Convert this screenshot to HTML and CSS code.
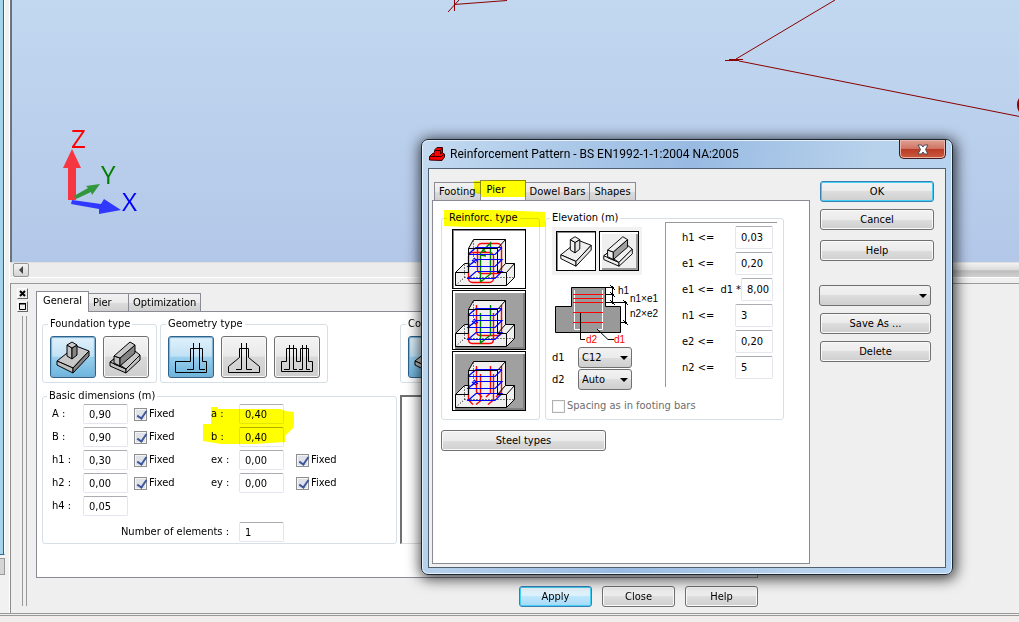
FILE: index.html
```html
<!DOCTYPE html>
<html lang="en">
  <head>
    <meta charset="utf-8" />
    <title>Reinforcement Pattern</title>
    <link rel="stylesheet" href="styles.css">
  </head>

  <body>
    <!-- shapes used by more than one button -->
    <svg class="defs" width="0" height="0">
      <symbol id="pad" viewBox="0 0 46 42">
        <path class="top" d="M7 25 L26 10 L39 15 L23 32 Z" />
        <path class="side" d="M7 25 L23 32 V37 L7 29 Z" />
        <path class="dark" d="M23 32 L39 15 V20 L23 37 Z" />
        <path class="side" d="M17 9 L22 12 V23 L17 20 Z" />
        <path class="dark" d="M22 12 L27 9 V19 L22 23 Z" />
        <path class="top" d="M17 9 L22 6 L27 9 L22 12 Z" />
      </symbol>
      <symbol id="strip" viewBox="0 0 46 42">
        <path class="side" d="M7 26 L11 23 V28 L23 33 V37 L7 30 Z" />
        <path class="side" d="M7 26 L11 23 L23 29 V33 Z" />
        <path class="top" d="M17 29 L32 15 L37 19 L23 33 Z" />
        <path class="side" d="M23 33 L37 19 V24 L23 37 Z" />
        <path class="side" d="M11 20 L17 22 V30 L11 27 Z" />
        <path class="dark" d="M17 22 L32 9 V17 L17 30 Z" />
        <path class="top" d="M11 20 L27 6 L32 9 L17 22 Z" />
      </symbol>
      <symbol id="pier" viewBox="0 0 74 60">
        <path fill="#f0f0f0" stroke="#000" d="M3.5 56.5 V43.5 L12.5 34.5 H16.5 V19.5 L21.5 10.5 H53.5 V34.5 H62.5 V48.5 L54.5 56.5 Z" />
        <path fill="none" stroke="#000" stroke-dasharray="1 2" d="M3.5 56.5 L12.5 48.5 H62.5 M12.5 48.5 V34.5 H21.5 V10.5" />
      </symbol>
      <symbol id="pier-front" viewBox="0 0 74 60">
        <path fill="none" stroke="#000" d="M3.5 43.5 H16.5 V19.5 H45.5 V43.5 H54.5 V56.5 M45.5 19.5 L53.5 10.5 M45.5 43.5 L53.5 34.5 M54.5 43.5 L62.5 34.5" />
      </symbol>
      <symbol id="hoops" viewBox="0 0 74 60">
        <path fill="none" stroke="#00f" stroke-width="1.2" d="M16 25.5 H43 L50 18.5 M24 18.5 H50 M16 25.5 L24 18.5 M16 37.5 H43 L50 30.5 H24 Z M16 49.5 H43 L50 42.5 H24 Z M20 31 l4 3 M22 29 l4 4" />
      </symbol>
    </svg>

    <div class="app">
      <div class="workspace">
        <div class="edge">
          <div class="edge-frame"></div>
          <div class="edge-button"></div>
        </div>

        <div class="document">
          <div class="view">
            <svg class="scene" width="100%" height="100%">
              <g fill="none" stroke="#8b0000">
                <path d="M442.5 0 V11 M436 12 L447 0 M442 4.5 L495 0.5" />
                <path d="M713 60.5 H727 M717 59.5 H731 M724 59 L823 0 M727 61 L1010 117" />
                <ellipse cx="1011" cy="105" rx="5" ry="8" stroke-width="2" />
              </g>
              <path fill="#f63640" d="M56 200 V168 H51 L60 149 L69 168 H64 V200 Z" />
              <path fill="#32963c" d="M62 196 L76 188 L74 186 L88 184 L80 195 L79 192 L64 199 Z" />
              <path fill="#3038ff" d="M60 200 L89 204 L92 199 L109 210 L87 214 L87 209 L59 204 Z" />
              <text class="axis axis-z" x="59" y="148">Z</text>
              <text class="axis axis-y" x="89" y="184">Y</text>
              <text class="axis axis-x" x="110" y="211">X</text>
            </svg>
          </div>

          <div class="scrollbar">
            <button class="scroll-left" aria-label="Scroll left"></button>
          </div>

          <div class="panel">
            <div class="dock">
              <button class="dock-button" aria-label="Close panel">
                <svg width="9" height="9"><path d="M2 2 L7 7 M7 2 L2 7" /></svg>
              </button>
              <button class="dock-button" aria-label="Maximize panel">
                <svg width="9" height="9"><path d="M1 2 H8 M1.5 1 V7.5 H7.5 V1 M1 1.5 H8" /></svg>
              </button>
              <div class="grip"></div>
            </div>

            <form class="footing">
              <div class="tabs" role="tablist">
                <button type="button" class="tab active" role="tab">General</button>
                <button type="button" class="tab tab-pier" role="tab">Pier</button>
                <button type="button" class="tab" role="tab">Optimization</button>
              </div>

              <div class="page general">
                <div class="types">
                  <fieldset class="icons">
                    <legend>Foundation type</legend>
                    <button type="button" class="icon selected" aria-label="Pad"><svg><use href="#pad" /></svg></button>
                    <button type="button" class="icon" aria-label="Strip"><svg><use href="#strip" /></svg></button>
                  </fieldset>
                  <fieldset class="icons">
                    <legend>Geometry type</legend>
                    <button type="button" class="icon selected" aria-label="Rectangular">
                      <svg viewBox="0 0 46 42"><path class="line" d="M7.5 36.5 V25.5 H22.5 V12.5 H34.5 V25.5 H38.5 V36.5 Z M25.5 7 V33.5 H19 M31.5 7 V33.5 H37" /></svg>
                    </button>
                    <button type="button" class="icon" aria-label="Tapered">
                      <svg viewBox="0 0 46 42"><path class="line" d="M7.5 36.5 V30.5 L18.5 21.5 V12.5 H27.5 V21.5 L38.5 30.5 V36.5 Z M20.5 7 V33.5 H15 M25.5 7 V33.5 H31" /></svg>
                    </button>
                    <button type="button" class="icon" aria-label="Double">
                      <svg viewBox="0 0 46 42"><path class="line" d="M7.5 35.5 V25.5 H12.5 V12.5 H22.5 V25.5 H26.5 V12.5 H34.5 V25.5 H38.5 V35.5 Z M15.5 9 V33.5 H10 M19.5 9 V33.5 H23 M28.5 9 V33.5 H25 M32.5 9 V33.5 H36" /></svg>
                    </button>
                  </fieldset>
                </div>

                <fieldset class="icons">
                  <legend>Co</legend>
                  <button type="button" class="icon selected" aria-label="Connection"><svg><use href="#pad" /></svg></button>
                </fieldset>

                <fieldset class="basic">
                  <legend>Basic dimensions (m)</legend>
                  <div class="dims">
                    <div class="dims-left">
                      <label for="dim-A">A :</label>
                      <input type="text" id="dim-A" value="0,90" />
                      <label class="check"><input type="checkbox" checked /> Fixed</label>
                      <label for="dim-B">B :</label>
                      <input type="text" id="dim-B" value="0,90" />
                      <label class="check"><input type="checkbox" checked /> Fixed</label>
                      <label for="dim-h1">h1 :</label>
                      <input type="text" id="dim-h1" value="0,30" />
                      <label class="check"><input type="checkbox" checked /> Fixed</label>
                      <label for="dim-h2">h2 :</label>
                      <input type="text" id="dim-h2" value="0,00" />
                      <label class="check"><input type="checkbox" checked /> Fixed</label>
                      <label for="dim-h4">h4 :</label>
                      <input type="text" id="dim-h4" value="0,05" />
                    </div>
                    <div class="dims-right">
                      <label for="dim-a">a :</label>
                      <input type="text" id="dim-a" value="0,40" />
                      <span></span>
                      <label for="dim-b">b :</label>
                      <input type="text" id="dim-b" value="0,40" />
                      <span></span>
                      <label for="dim-ex">ex :</label>
                      <input type="text" id="dim-ex" value="0,00" />
                      <label class="check"><input type="checkbox" checked /> Fixed</label>
                      <label for="dim-ey">ey :</label>
                      <input type="text" id="dim-ey" value="0,00" />
                      <label class="check"><input type="checkbox" checked /> Fixed</label>
                      <svg class="marker marker-ab" width="92" height="37">
                        <path d="M8 0 L15 0 L15 2 H78 L82 4 L91 5 V20 L82 29 V35 L50 37 H18 L0 34 V17 H8 Z" />
                      </svg>
                    </div>
                  </div>
                  <div class="count">
                    <label for="elements">Number of elements :</label>
                    <input type="text" id="elements" value="1" />
                  </div>
                </fieldset>

                <div class="preview"></div>
              </div>

              <div class="actions">
                <button type="button" class="btn hot">Apply</button>
                <button type="button" class="btn">Close</button>
                <button type="button" class="btn">Help</button>
              </div>
            </form>
          </div>
        </div>
      </div>

      <div class="status"></div>

      <div class="dialog" role="dialog" aria-labelledby="dialog-title">
        <div class="titlebar">
          <svg width="16" height="14" viewBox="0 0 16 14">
            <path fill="#f00" stroke="#300" d="M0.5 13 V9.5 L3.5 6.5 H5 L6 2.5 L8 0.5 H13.5 V6 L15.5 7 V10 L13 13.5 Z" />
            <path fill="none" stroke="#300" d="M1 9.5 H12.5 L15 7 M5 9 V6.5 M6 3.5 H11.5 V7 L13.5 5 M11.5 3.5 L13 1" />
          </svg>
          <span id="dialog-title">Reinforcement Pattern - BS EN1992-1-1:2004 NA:2005</span>
          <button class="close" aria-label="Close">
            <svg width="14" height="11" viewBox="0 0 14 11">
              <path d="M2 1 H5.5 L7 3 L8.5 1 H12 L9.5 5.5 L12 10 H8.5 L7 8 L5.5 10 H2 L4.5 5.5 Z" />
            </svg>
          </button>
        </div>

        <form class="client">
          <div class="sheet">
            <div class="tabs" role="tablist">
              <button type="button" class="tab" role="tab">Footing</button>
              <button type="button" class="tab active" role="tab">Pier</button>
              <button type="button" class="tab" role="tab">Dowel Bars</button>
              <button type="button" class="tab" role="tab">Shapes</button>
            </div>

            <div class="page pattern">
              <svg class="marker marker-tab" width="52" height="22">
                <path d="M0 1 L22 0 H52 V17 H7 V14 L0 13 Z" />
              </svg>
              <svg class="marker marker-type" width="102" height="18">
                <path d="M0 0 H50 L101 2 V17 H24 L0 16 Z" />
              </svg>

              <div class="groups">
                <fieldset class="reinforcement">
                  <legend>Reinforc. type</legend>
                  <button type="button" class="shape chosen" aria-label="Closed bars">
                    <svg viewBox="0 0 74 60">
                      <use href="#pier" />
                      <g class="red"><rect x="16.5" y="23.5" width="25" height="30" rx="4" /><rect x="25.5" y="14.5" width="24" height="30" rx="4" /></g>
                      <path class="green" d="M28.5 53 V24 L38.5 14 V45 L28.5 53 M30 21 l4 2 M29 26 l5 1" />
                      <use href="#hoops" />
                      <use href="#pier-front" />
                    </svg>
                  </button>
                  <button type="button" class="shape" aria-label="U bars">
                    <svg viewBox="0 0 74 60">
                      <use href="#pier" />
                      <g class="red"><path d="M16.5 23 V49 Q16.5 53.5 20 53.5 H38 Q41.5 53.5 41.5 49 V23 M24.5 15 V41 Q24.5 45.5 28 45.5 H46 Q49.5 45.5 49.5 41 V15" /></g>
                      <path class="green" d="M28.5 23 V53 L38.5 45 V15" />
                      <use href="#hoops" />
                      <use href="#pier-front" />
                    </svg>
                  </button>
                  <button type="button" class="shape" aria-label="Starter bars">
                    <svg viewBox="0 0 74 60">
                      <use href="#pier" />
                      <g class="red"><path d="M16.5 23 V49 L21 53.5 M28.5 23 V50 L24 53.5 M41.5 23 V49 L36 53.5 M24.5 15 V41 L30 46 M38.5 15 V42 L34 46 M49.5 15 V41 L44 46" /></g>
                      <use href="#hoops" />
                      <use href="#pier-front" />
                    </svg>
                  </button>
                </fieldset>

                <fieldset class="elevation">
                  <legend>Elevation (m)</legend>
                  <div class="elevation-left">
                    <div class="toolbar">
                      <button type="button" class="flat chosen" aria-label="Pad elevation"><svg viewBox="3 2 40 38"><use href="#pad" width="46" height="42" /></svg></button>
                      <button type="button" class="flat" aria-label="Strip elevation"><svg viewBox="3 2 40 38"><use href="#strip" width="46" height="42" /></svg></button>
                    </div>

                    <svg class="section" width="106" height="60">
                      <path fill="#999" stroke="#000" d="M0.5 46.5 V20.5 H16.5 V1.5 H50.5 V20.5 H65.5 V46.5 Z" />
                      <path fill="none" stroke="#fff" d="M19.5 4 V43.5 H25 M47.5 4 V43.5 H42" />
                      <path fill="none" stroke="#f00" d="M18 8.5 H48 M18 12.5 H48 M18 16.5 H48 M18 26.5 H48 M18 36.5 H48" />
                      <path fill="none" stroke="#000" d="M50 1.5 H59 M50 8.5 H59 M50 16.5 H72 M66 36.5 H72 M57.5 0 V18 M70.5 15 V38 M55 -1 l5 5 M55 6 l5 5 M55 14 l5 5 M68 14 l5 5 M68 34 l5 5 M25.5 27 V53.5 H30 M42 43 L53 53.5 H59" />
                      <text x="63" y="8">h1</text>
                      <text x="75" y="16">n1×e1</text>
                      <text x="75" y="31">n2×e2</text>
                      <text class="bar" x="31" y="57">d2</text>
                      <text class="bar" x="59" y="57">d1</text>
                    </svg>

                    <div class="bars">
                      <label for="bar-d1">d1</label>
                      <div class="select"><select id="bar-d1"><option>C12</option></select></div>
                      <label for="bar-d2">d2</label>
                      <div class="select"><select id="bar-d2"><option>Auto</option></select></div>
                    </div>
                  </div>

                  <div class="limits">
                    <label for="lim-h1">h1 &lt;=</label>
                    <input type="text" id="lim-h1" value="0,03" />
                    <label for="lim-e1">e1 &lt;=</label>
                    <input type="text" id="lim-e1" value="0,20" />
                    <label for="lim-e1d">e1 &lt;=  d1 *</label>
                    <input type="text" id="lim-e1d" class="short" value="8,00" />
                    <label for="lim-n1">n1 &lt;=</label>
                    <input type="text" id="lim-n1" value="3" />
                    <label for="lim-e2">e2 &lt;=</label>
                    <input type="text" id="lim-e2" value="0,20" />
                    <label for="lim-n2">n2 &lt;=</label>
                    <input type="text" id="lim-n2" value="5" />
                  </div>

                  <label class="check disabled"><input type="checkbox" disabled /> Spacing as in footing bars</label>
                </fieldset>
              </div>

              <button type="button" class="btn steel">Steel types</button>
            </div>
          </div>

          <div class="commands">
            <button type="button" class="btn focus">OK</button>
            <button type="button" class="btn">Cancel</button>
            <button type="button" class="btn help">Help</button>
            <div class="select presets"><select aria-label="Saved patterns"><option></option></select></div>
            <button type="button" class="btn narrow">Save As ...</button>
            <button type="button" class="btn narrow">Delete</button>
          </div>
        </form>
      </div>
    </div>
  </body>
</html>
```

FILE: styles.css
```css
* {
  box-sizing: border-box;
}

body {
  margin: 0;
  font: 11px/14px "DejaVu Sans Condensed", "DejaVu Sans", sans-serif;
  color: #000;
  background: #efefef;
}

button,
input,
select {
  font: inherit;
  color: inherit;
  margin: 0;
  padding: 0;
}

svg {
  display: block;
}

.defs {
  position: absolute;
}

.app {
  position: relative;
  display: flex;
  flex-direction: column;
  min-height: 100vh;
  overflow: hidden;
}

.workspace {
  flex: 1;
  display: flex;
}

/* edge of the neighbouring window */
.edge {
  width: 10px;
  display: flex;
  flex-direction: column;
  border-right: 1px solid #fff;
  background: #f1f1f1;
}

.edge-frame {
  flex: 1;
  width: 5px;
  border-right: 1px solid #fff;
  border-bottom: 1px solid #2c6c94;
  background: linear-gradient(to right, #a4d4ec 3px, #2f607f 3px);
}

.edge-button {
  width: 5px;
  height: 17px;
  margin: 3px 0 38px;
  border: 1px solid #999;
  border-left: 0;
  background: #d4d4d4;
}

.document {
  flex: 1;
  min-width: 0;
  display: flex;
  flex-direction: column;
}

.view {
  flex: 1;
  display: flex;
  border-left: 2px solid #6b737c;
  background: linear-gradient(#c2d8f0, #b3c7e8);
  overflow: hidden;
}

.scene {
  flex: 1;
  height: auto;
}

.axis {
  font: 26px "Open Sans", sans-serif;
}

.axis-z {
  fill: #f00;
}

.axis-y {
  fill: #008000;
}

.axis-x {
  fill: #00f;
}

.scrollbar {
  height: 16px;
  margin-bottom: 5px;
  padding-left: 3px;
  border-top: 1px solid #e0e0e0;
  border-bottom: 1px solid #fff;
  background: linear-gradient(to right, #ececec 50%, transparent 50%), linear-gradient(#f2f2f2, #dadada 50%, #bdbdbd 55%, #d0d0d0);
}

.scroll-left {
  display: block;
  width: 16px;
  height: 14px;
  border: 1px solid #979797;
  border-radius: 2px;
  background: linear-gradient(#f4f4f4, #d4d4d4);
}

.scroll-left::before {
  content: "";
  display: block;
  width: 0;
  margin: 0 auto;
  border: 4px solid transparent;
  border-left: 0;
  border-right-color: #444;
}

.panel {
  display: flex;
  padding: 7px 0 6px 6px;
  border-top: 1px solid #999;
  border-left: 1px solid #8c8c8c;
}

.dock {
  width: 11px;
  margin: -3px 8px 0 0;
  display: flex;
  flex-direction: column;
  gap: 2px;
}

.dock-button {
  height: 11px;
  border: 1px solid #fff;
  border-right-color: #666;
  border-bottom-color: #666;
  background: #efefef;
}

.dock-button path {
  fill: none;
  stroke: #000;
  stroke-width: 2;
}

.dock-button + .dock-button path {
  stroke-width: 1;
}

.grip {
  flex: 1;
  width: 5px;
  margin: 2px 0 1px 5px;
  border: solid #999;
  border-width: 0 1px;
}

.footing {
  width: 722px;
  max-width: 100%;
}

.tabs {
  display: flex;
  align-items: flex-end;
}

.tab {
  height: 18px;
  padding: 0 4px;
  border: 1px solid #898c95;
  border-bottom: 0;
  margin-right: -1px;
  background: linear-gradient(#f2f2f2, #eaeaea 50%, #dcdcdc 50%, #d0d0d0);
}

.tab.active {
  position: relative;
  height: 21px;
  margin-bottom: -1px;
  padding: 0 6px 2px;
  background: #fff;
}

.tab-pier {
  width: 41px;
  text-align: left;
}

.sheet .tab.active {
  width: 46px;
  text-align: left;
}

.page {
  border: 1px solid #898c95;
  background: #fff;
}

.general {
  display: grid;
  grid-template-columns: 355px 1fr;
  align-content: start;
  gap: 6px 3px;
  min-height: 267px;
  padding: 5px;
}

fieldset {
  min-width: 0;
  margin: 0;
  border: 1px solid #d5dfe5;
  border-radius: 3px;
}

legend {
  height: 14px;
  margin-left: -2px;
  padding: 0 2px;
}

.types {
  display: flex;
  gap: 3px;
}

.icons {
  display: flex;
  gap: 7px;
  padding: 5px 7px 4px;
}

.icon {
  width: 46px;
  height: 42px;
  border: 1px solid #707070;
  border-radius: 3px;
  background: linear-gradient(#f4f4f4, #e9e9e9 48%, #d8d8d8 50%, #cecece);
  box-shadow: inset 0 0 0 1px #f8f8f8;
}

.icon svg {
  width: 46px;
  height: 42px;
  margin: -1px;
}

.icon.selected {
  border-color: #2c628b;
  background: linear-gradient(#e0f1fb, #c2e2f5 48%, #9bd0ee 50%, #6cb4dd);
  box-shadow: inset 0 0 1px 1px #7db0d0;
}

.icon {
  --top: #c8c8c8;
  --side: #c0c0c0;
  --dark: #848484;
}

.flat {
  --top: #f0f0f0;
  --side: #f0f0f0;
  --dark: #a0a0a0;
}

.flat.chosen {
  --dark: #e4e4e4;
}

#pad path,
#strip path {
  stroke: #000;
  stroke-linejoin: round;
}

.top {
  fill: var(--top);
}

.side {
  fill: var(--side);
}

.dark {
  fill: var(--dark);
}

.line {
  fill: none;
  stroke: #000;
}

input[type="text"] {
  width: 45px;
  height: 20px;
  padding: 1px 0 0 5px;
  border: 1px solid #e3e6ee;
  border-top-color: #abadb3;
  border-radius: 2px;
  background: #fff;
}

.basic {
  padding: 1px 0 1px 9px;
}

.basic legend {
  margin-left: -5px;
}

.dims {
  display: flex;
}

.dims-left,
.dims-right {
  display: grid;
  grid-auto-rows: 20px;
  align-items: center;
  row-gap: 3px;
}

.dims-left {
  grid-template-columns: 31px 51px 77px;
}

.dims-right {
  position: relative;
  grid-template-columns: 28px 57px 1fr;
  align-content: start;
}

.check {
  display: flex;
  align-items: center;
  gap: 2px;
}

.check input {
  appearance: none;
  width: 13px;
  height: 13px;
  border: 1px solid #8e8f8f;
  background: #dfe3e9;
  box-shadow: inset 0 0 0 1px #f4f4f4;
}

.check input:checked::before {
  content: "";
  display: block;
  width: 4px;
  height: 8px;
  margin: 0 0 0 4px;
  border: solid #3f569b;
  border-width: 0 2px 2px 0;
  transform: rotate(35deg);
}

.check.disabled {
  color: #6d6d6d;
}

.check.disabled input {
  border-color: #b1b1b1;
  background: #fff;
}

.count {
  display: flex;
  align-items: center;
  justify-content: flex-end;
  gap: 10px;
  margin-top: 6px;
  padding-right: 112px;
}

.preview {
  margin-top: 6px;
  border: 2px solid #6f6f6f;
  border-bottom: 1px solid #ddd;
}

/* highlighter strokes */
.marker {
  position: absolute;
  fill: #ff0;
  mix-blend-mode: multiply;
  pointer-events: none;
}

.marker-ab {
  left: -8px;
  top: 3px;
}

.marker-tab {
  left: 41px;
  top: -21px;
  z-index: 1;
}

.marker-type {
  left: 11px;
  top: 9px;
}

.actions {
  display: flex;
  justify-content: flex-end;
  gap: 10px;
  margin-top: 8px;
}

.btn {
  height: 21px;
  border: 1px solid #707070;
  border-radius: 3px;
  background: linear-gradient(#f2f2f2, #ebebeb 50%, #dddddd 50%, #cfcfcf);
  box-shadow: inset 0 0 0 1px #fafafa;
}

.actions .btn {
  width: 73px;
}

.btn.hot,
.btn.focus {
  border-color: #3c7fb1;
  box-shadow: inset 0 0 0 1px #43d0f8;
}

.btn.hot {
  background: linear-gradient(#eaf6fd, #d9f0fc 50%, #bee6fd 50%, #a7d9f5);
}

.status {
  height: 9px;
  border-top: 3px double #999;
  background: #f1edec;
}

.dialog {
  position: absolute;
  left: 421px;
  top: 139px;
  width: 532px;
  padding: 0 6px 6px;
  border: 1px solid #1c2733;
  border-radius: 7px;
  background: linear-gradient(100deg, #c3daf0, #98bae2 45%, #b8d2ec 75%, #b3d3f3);
  box-shadow: inset 0 0 0 1px #e4f1fc, 1px 2px 14px 2px rgba(0, 0, 0, 0.75);
}

.titlebar {
  position: relative;
  display: flex;
  align-items: center;
  gap: 5px;
  height: 28px;
  padding-left: 1px;
  font: 12px/16px Roboto, sans-serif;
}

.close {
  position: absolute;
  right: 0;
  top: 0;
  width: 47px;
  height: 19px;
  display: flex;
  align-items: center;
  justify-content: center;
  border: 1px solid #431a1c;
  border-top: 0;
  border-radius: 0 0 5px 5px;
  background: linear-gradient(#e0a293, #cf7463 48%, #b83a26 50%, #cc5a3c);
  box-shadow: inset 0 0 0 1px #e8b5a8;
}

.close path {
  fill: #fff;
  stroke: #4a4a58;
}

.client {
  display: flex;
  justify-content: space-between;
  padding: 11px 11px 3px 3px;
  border: 1px solid #4f6070;
  background: #efefef;
}

.sheet {
  width: 378px;
}

.sheet .tabs {
  padding-left: 2px;
}

.pattern {
  position: relative;
  min-height: 364px;
  padding: 10px 8px;
}

.groups {
  display: flex;
  gap: 5px;
}

.reinforcement {
  display: flex;
  flex-direction: column;
  gap: 1px;
  width: 99px;
  padding: 4px 7px 8px;
}

.shape {
  width: 74px;
  height: 60px;
  margin-left: 3px;
  border: 1px solid #000;
  background: #a0a0a0;
  box-shadow: inset 1px 1px 0 1px #fff, inset -1px -1px 0 1px #808080;
}

.shape svg {
  width: 74px;
  height: 60px;
  margin: -1px;
}

.shape.chosen,
.flat.chosen {
  background: #fff;
  box-shadow: inset 1px 1px 0 #888;
}

.red,
.green {
  fill: none;
  stroke: #f00;
  stroke-width: 1.4;
}

.green {
  stroke: #008000;
}

.elevation {
  display: grid;
  grid-template-columns: 113px 112px;
  width: 239px;
  padding: 2px 6px 6px;
}

.toolbar {
  display: flex;
  gap: 3px;
  width: 90px;
  padding: 4px;
  background: #f2f2f2;
}

.flat {
  width: 40px;
  height: 40px;
  border: 1px solid #000;
  background: #efefef;
  box-shadow: inset 1px 1px 0 1px #fff, inset -1px -1px 0 1px #999;
}

.flat svg {
  width: 38px;
  height: 38px;
}

.section {
  margin: 11px 0 1px 3px;
  overflow: visible;
}

.section text {
  font: 10px "Liberation Sans", sans-serif;
}

.section .bar {
  fill: #f00;
}

.bars {
  display: grid;
  grid-template-columns: 26px 54px;
  row-gap: 1px;
  align-items: center;
}

.select {
  position: relative;
}

.select select {
  appearance: none;
  display: block;
  width: 100%;
  height: 21px;
  padding-left: 3px;
  border: 1px solid #707070;
  border-radius: 3px;
  background: linear-gradient(#f2f2f2, #ebebeb 50%, #dddddd 50%, #cfcfcf);
}

.select::after {
  content: "";
  position: absolute;
  right: 4px;
  top: 9px;
  border: 4px solid transparent;
  border-top-color: #000;
  border-bottom: 0;
  pointer-events: none;
}

.limits {
  display: grid;
  grid-template-columns: minmax(0, 1fr) 38px;
  grid-auto-rows: 23px;
  align-items: center;
  row-gap: 3px;
  height: 165px;
  margin-top: -5px;
  padding: 3px 4px 0 16px;
  border-top: 1px solid #999;
  border-left: 1px solid #999;
}

.limits label {
  white-space: pre;
}

.limits input[type="text"] {
  width: 38px;
  height: 23px;
  padding-top: 0;
}

.limits input[type="text"].short {
  width: 32px;
  margin-left: 6px;
}

.elevation .check {
  grid-column: 1 / 3;
  margin-top: 9px;
}

.steel {
  width: 165px;
  margin-top: 10px;
}

.commands {
  display: flex;
  flex-direction: column;
  gap: 7px;
  width: 114px;
  padding-top: 1px;
}

.help {
  margin-top: 3px;
}

.presets {
  width: 112px;
  margin: 17px 0 0 -1px;
}

.narrow {
  width: 111px;
}
```
